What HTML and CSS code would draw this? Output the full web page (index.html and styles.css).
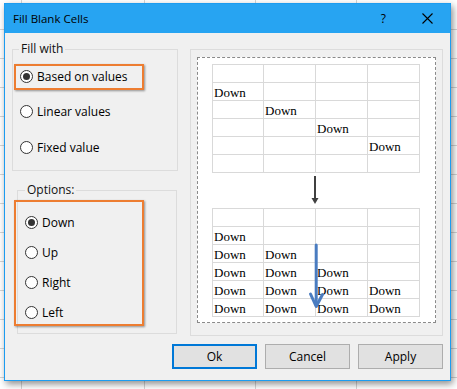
FILE: index.html
```html
<!DOCTYPE html>
<html>
<head>
<meta charset="utf-8">
<link rel="stylesheet" href="styles.css">
</head>
<body>
<div class="win">
  <div class="titlebar">
    <span class="title">Fill Blank Cells</span>
    <span class="help">?</span>
    <svg class="close" width="11" height="11" viewBox="0 0 11 11"><path d="M0.5 0.5L10.5 10.5M10.5 0.5L0.5 10.5" stroke="#000" stroke-width="1.1" fill="none"/></svg>
  </div>
  <div class="content">
    <div class="main">
      <div class="left">
        <fieldset class="grp grp-fill">
          <legend>Fill with</legend>
          <div class="hl hl-fill">
            <div class="radio"><span class="rb on"></span>Based on values</div>
          </div>
          <div class="radio plain r-linear"><span class="rb"></span>Linear values</div>
          <div class="radio plain r-fixed"><span class="rb"></span>Fixed value</div>
        </fieldset>
        <fieldset class="grp grp-opt">
          <legend>Options:</legend>
          <div class="hl hl-opt">
            <div class="radio opt"><span class="rb on"></span>Down</div>
            <div class="radio opt"><span class="rb"></span>Up</div>
            <div class="radio opt"><span class="rb"></span>Right</div>
            <div class="radio opt"><span class="rb"></span>Left</div>
          </div>
        </fieldset>
      </div>
      <div class="panel">
        <div class="preview">
          <div class="sheet">
            <div></div><div></div><div></div><div></div>
            <div>Down</div><div></div><div></div><div></div>
            <div></div><div>Down</div><div></div><div></div>
            <div></div><div></div><div>Down</div><div></div>
            <div></div><div></div><div></div><div>Down</div>
            <div></div><div></div><div></div><div></div>
          </div>
          <svg class="arrow" width="208" height="35" viewBox="0 0 208 35">
            <rect x="102" y="3" width="2" height="23" fill="#404040"/>
            <path d="M99.5 25L106.5 25L103 31Z" fill="#404040"/>
          </svg>
          <div class="sheet-wrap">
            <div class="sheet">
              <div></div><div></div><div></div><div></div>
              <div>Down</div><div></div><div></div><div></div>
              <div>Down</div><div>Down</div><div></div><div></div>
              <div>Down</div><div>Down</div><div>Down</div><div></div>
              <div>Down</div><div>Down</div><div>Down</div><div>Down</div>
              <div>Down</div><div>Down</div><div>Down</div><div>Down</div>
            </div>
            <svg class="blue-arrow" width="208" height="109" viewBox="0 0 208 109">
              <path d="M104.2 37L104.2 97" stroke="#4a7cc0" stroke-width="3" stroke-linecap="round" fill="none"/>
              <path d="M98.5 86L104.2 98.5L110.5 86.5" stroke="#4a7cc0" stroke-width="3" stroke-linecap="round" stroke-linejoin="round" fill="none"/>
            </svg>
          </div>
        </div>
      </div>
    </div>
    <div class="buttons">
      <div class="btn btn-ok">Ok</div>
      <div class="btn">Cancel</div>
      <div class="btn">Apply</div>
    </div>
  </div>
</div>
</body>
</html>
```
FILE: styles.css
```css
html, body {
  margin: 0;
  padding: 0;
}
body {
  width: 457px;
  height: 389px;
  overflow: hidden;
  font-family: "Open Sans", "Noto Sans", sans-serif;
  font-size: 12px;
  color: #000;
  background-color: #ffffff;
  background-image:
    linear-gradient(to right, transparent 21px, #d4d4d4 21px, #d4d4d4 22px, transparent 22px),
    linear-gradient(to right, transparent 144px, #d4d4d4 144px, #d4d4d4 145px, transparent 145px),
    linear-gradient(to right, transparent 255px, #d4d4d4 255px, #d4d4d4 256px, transparent 256px),
    linear-gradient(to right, transparent 356px, #d4d4d4 356px, #d4d4d4 357px, transparent 357px),
    repeating-linear-gradient(to bottom, transparent 0, transparent 28px, #d4d4d4 28px, #d4d4d4 29px);
  background-position: 0 0, 0 0, 0 0, 0 0, 0 1px;
}
.win {
  box-sizing: border-box;
  width: 447px;
  height: 378px;
  margin: 3px 0 0 4px;
  border: 1px solid #1c9cf0;
  background: #f0f0f0;
  box-shadow: 2px 3px 7px rgba(0, 0, 0, 0.45);
}
.titlebar {
  height: 29px;
  background: #27a4f2;
  display: flex;
  align-items: center;
  padding: 0 17px 0 8px;
}
.title {
  flex: 1;
  font-size: 11.5px;
  color: #000;
}
.help {
  font-size: 12px;
  margin-right: 36px;
}
.close {
  display: block;
  margin-top: -1px;
}
.content {
  padding: 8px 7px 0 7px;
}
.main {
  display: flex;
  align-items: flex-start;
  gap: 12px;
}
.left {
  width: 166px;
  display: flex;
  flex-direction: column;
  align-items: flex-start;
}
.grp {
  margin: 0;
  padding: 0;
  min-inline-size: 0;
  border: 1px solid #dcdcdc;
  box-sizing: border-box;
}
.grp legend {
  padding: 0 2px;
  line-height: 16px;
  font-size: 12px;
  color: #111;
}
.grp-fill {
  width: 166px;
  padding-bottom: 12px;
  margin-bottom: 11px;
}
.grp-fill legend {
  margin-left: 6px;
}
.grp-opt {
  width: 160px;
  margin-left: 5px;
  padding-bottom: 7px;
}
.grp-opt legend {
  margin-left: 7px;
}
.hl {
  box-sizing: border-box;
  width: 130px;
  border: 2px solid #ed7d31;
  box-shadow: 1px 1px 2px rgba(0, 0, 0, 0.4);
}
.hl-fill {
  margin: 7px 0 0 1px;
  height: 26px;
  padding-left: 4px;
}
.hl-fill .radio {
  height: 21px;
}
.hl-opt {
  margin: 2px 0 0 -4px;
  height: 126px;
  padding: 8px 0 0 9px;
  display: flex;
  flex-direction: column;
  gap: 6px;
}
.radio {
  display: flex;
  align-items: center;
  height: 22px;
  white-space: nowrap;
}
.radio.opt {
  height: 24px;
}
.plain {
  padding-left: 7px;
}
.r-linear {
  margin-top: 10px;
}
.r-fixed {
  margin-top: 14px;
}
.rb {
  box-sizing: border-box;
  width: 13px;
  height: 13px;
  border: 1px solid #333;
  border-radius: 50%;
  background: #fff;
  margin-right: 4px;
  display: flex;
  align-items: center;
  justify-content: center;
  flex: none;
}
.rb.on::after {
  content: "";
  width: 7px;
  height: 7px;
  border-radius: 50%;
  background: #333;
}
.panel {
  box-sizing: border-box;
  margin-top: 8px;
  width: 253px;
  height: 287px;
  border: 1px solid #dcdcdc;
  padding: 7px 6px 0 6px;
}
.preview {
  box-sizing: border-box;
  width: 239px;
  height: 266px;
  border: 1px dashed #8a8a8a;
  background: #fff;
  padding: 6px 0 0 14px;
}
.sheet {
  display: grid;
  grid-template-columns: 50px 51px 51px 51px;
  grid-auto-rows: 17px;
  gap: 1px;
  padding: 1px;
  width: 208px;
  box-sizing: border-box;
  background: #d9d9d9;
}
.sheet div {
  background: #fff;
  font-family: "Liberation Serif", "Times New Roman", serif;
  font-size: 13px;
  line-height: 19px;
  padding-left: 1px;
  white-space: nowrap;
  overflow: visible;
}
.arrow {
  display: block;
}
.sheet-wrap {
  position: relative;
  width: 208px;
}
.blue-arrow {
  position: absolute;
  left: 0;
  top: 0;
}
.buttons {
  display: flex;
  justify-content: flex-end;
  gap: 8px;
  margin-top: 8px;
}
.btn {
  box-sizing: border-box;
  width: 85px;
  height: 25px;
  border: 1px solid #adadad;
  background: #e1e1e1;
  display: flex;
  align-items: center;
  justify-content: center;
  font-size: 12px;
}
.btn-ok {
  border: 2px solid #0078d7;
}
```
